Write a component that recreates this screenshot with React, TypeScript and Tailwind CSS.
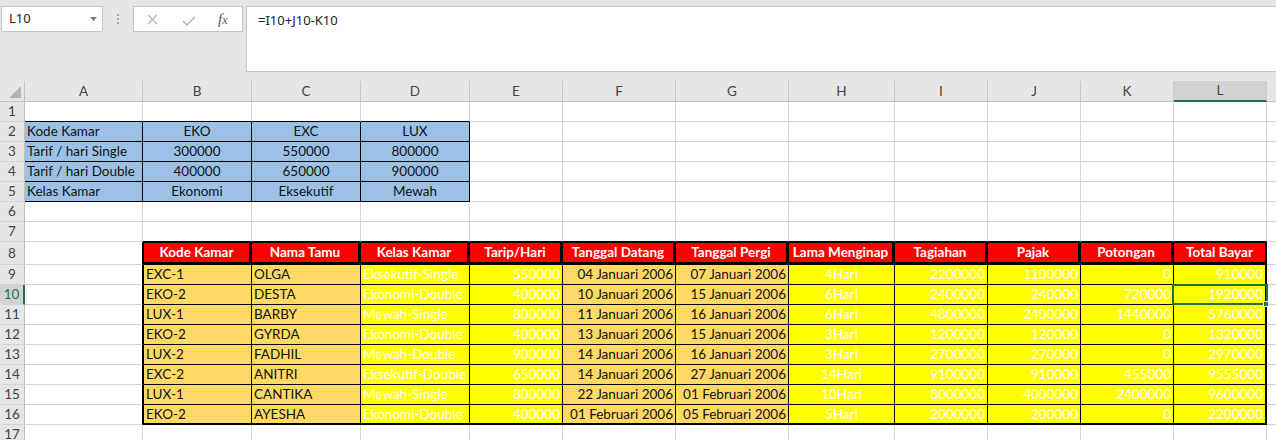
import type { ReactNode } from 'react'

const COLW = ['w-[118px]', 'w-[109px]', 'w-[109px]', 'w-[109px]', 'w-[93px]', 'w-[113px]', 'w-[113px]', 'w-[106px]', 'w-[93px]', 'w-[93px]', 'w-[93px]', 'w-[93px]']
const LETTERS = ['A', 'B', 'C', 'D', 'E', 'F', 'G', 'H', 'I', 'J', 'K', 'L']

const ORANGE = 'bg-[#ffd966] text-[#111]'
const YELLOW = 'bg-[#ffff00] text-white'

// main table columns B..L
const DCOL: { bg: string; al: string }[] = [
  { bg: ORANGE, al: 'justify-start' },
  { bg: ORANGE, al: 'justify-start' },
  { bg: YELLOW, al: 'justify-start' },
  { bg: YELLOW, al: 'justify-end' },
  { bg: ORANGE, al: 'justify-end' },
  { bg: ORANGE, al: 'justify-end' },
  { bg: YELLOW, al: 'justify-center' },
  { bg: YELLOW, al: 'justify-end' },
  { bg: YELLOW, al: 'justify-end' },
  { bg: YELLOW, al: 'justify-end' },
  { bg: YELLOW, al: 'justify-end' },
]

const TOP: string[][] = [
  ['Kode Kamar', 'EKO', 'EXC', 'LUX'],
  ['Tarif / hari Single', '300000', '550000', '800000'],
  ['Tarif / hari Double', '400000', '650000', '900000'],
  ['Kelas Kamar', 'Ekonomi', 'Eksekutif', 'Mewah'],
]

const HEAD = ['Kode Kamar', 'Nama Tamu', 'Kelas Kamar', 'Tarip/Hari', 'Tanggal Datang', 'Tanggal Pergi', 'Lama Menginap', 'Tagiahan', 'Pajak', 'Potongan', 'Total Bayar']

const DATA: string[][] = [
  ['EXC-1', 'OLGA', 'Eksekutif-Single', '550000', '04 Januari 2006', '07 Januari 2006', '4Hari', '2200000', '1100000', '0', '910000'],
  ['EKO-2', 'DESTA', 'Ekonomi-Double', '400000', '10 Januari 2006', '15 Januari 2006', '6Hari', '2400000', '240000', '720000', '1920000'],
  ['LUX-1', 'BARBY', 'Mewah-Single', '800000', '11 Januari 2006', '16 Januari 2006', '6Hari', '4800000', '2400000', '1440000', '5760000'],
  ['EKO-2', 'GYRDA', 'Ekonomi-Double', '400000', '13 Januari 2006', '15 Januari 2006', '3Hari', '1200000', '120000', '0', '1320000'],
  ['LUX-2', 'FADHIL', 'Mewah-Double', '900000', '14 Januari 2006', '16 Januari 2006', '3Hari', '2700000', '270000', '0', '2970000'],
  ['EXC-2', 'ANITRI', 'Eksekutif-Double', '650000', '14 Januari 2006', '27 Januari 2006', '14Hari', '9100000', '910000', '455000', '9555000'],
  ['LUX-1', 'CANTIKA', 'Mewah-Single', '800000', '22 Januari 2006', '01 Februari 2006', '10Hari', '8000000', '4000000', '2400000', '9600000'],
  ['EKO-2', 'AYESHA', 'Ekonomi-Double', '400000', '01 Februari 2006', '05 Februari 2006', '5Hari', '2000000', '200000', '0', '2200000'],
]

function cellClass(r: number, c: number) {
  const parts: string[] = []
  const inTop = r >= 2 && r <= 5 && c <= 3
  const inMain = r >= 8 && r <= 16 && c >= 1

  // right / bottom border colours
  const rBlack = inTop || (r >= 8 && r <= 16)
  const bBlack = (r >= 1 && r <= 5 && c <= 3) || (r >= 7 && r <= 16 && c >= 1)
  parts.push(rBlack ? 'border-r-black' : 'border-r-[#d4d4d4]')
  parts.push(bBlack ? 'border-b-black' : 'border-b-[#d4d4d4]')

  if (inTop) {
    parts.push('bg-[#9bc2e6]', c === 0 ? 'justify-start' : 'justify-center')
  } else if (r === 8 && c >= 1) {
    parts.push('bg-[#ff0000] text-white font-bold justify-center border-t border-t-black border-b-[3px]')
    parts.push(c === 11 ? 'border-r-2' : 'border-r-[3px]')
    if (c === 1) parts.push('border-l border-l-black')
  } else if (inMain) {
    const d = DCOL[c - 1]
    parts.push(d.bg, d.al)
    if (c === 1) parts.push('border-l border-l-black')
    if (c === 11) parts.push('border-r-2')
    if (r === 16) parts.push('border-b-2')
  }
  return parts.join(' ')
}

function cellText(r: number, c: number) {
  if (r >= 2 && r <= 5 && c <= 3) return TOP[r - 2][c]
  if (r === 8 && c >= 1) return HEAD[c - 1]
  if (r >= 9 && r <= 16 && c >= 1) return DATA[r - 9][c - 1]
  return ''
}

function Cell({ r, c }: { r: number; c: number }) {
  const selected = r === 10 && c === 11
  return (
    <div
      className={`${COLW[c]} shrink-0 h-full border-r border-b flex items-center px-[2px] whitespace-nowrap leading-[19px] ${selected ? 'relative z-10' : 'overflow-hidden'} ${cellClass(r, c)}`}
    >
      {cellText(r, c)}
      {selected && (
        <>
          <div className="absolute -left-[2px] -top-[1px] w-[96px] h-[21px] border-2 border-[#217346]" />
          <div className="absolute left-[89px] top-[16px] w-[6px] h-[6px] bg-[#217346] border border-white" />
        </>
      )}
    </div>
  )
}

function RowHead({ n }: { n: number }) {
  const sel = n === 10
  return (
    <div
      className={`w-[25px] shrink-0 h-full flex items-center justify-center border-b border-b-[#d4d4d4] ${
        sel ? 'bg-[#d2d2d2] text-[#217346] border-r-2 border-r-[#217346]' : 'bg-[#e6e6e6] text-[#444] border-r border-r-[#c0c0c0]'
      }`}
    >
      {n}
    </div>
  )
}

function Row({ n, h }: { n: number; h: string }) {
  return (
    <div className={`flex ${h}`}>
      <RowHead n={n} />
      {LETTERS.map((_, c) => (
        <Cell key={c} r={n} c={c} />
      ))}
      <div className="flex-1 h-full border-b border-b-[#d4d4d4]" />
    </div>
  )
}

function Toolbar() {
  return (
    <div className="h-[81px] bg-[#e6e6e6] flex items-start pt-[6px] pl-[1px] font-['Noto_Sans',sans-serif] text-[13px] text-[#222]">
      <div className="w-[102px] h-[26px] shrink-0 bg-white border border-[#c6c6c6] flex items-center justify-between pl-[7px] pr-[5px]">
        <span>L10</span>
        <svg width="7" height="4" viewBox="0 0 7 4">
          <polygon points="0,0 7,0 3.5,4" fill="#7a7a7a" />
        </svg>
      </div>
      <div className="w-[30px] h-[26px] shrink-0 flex flex-col items-center justify-center gap-[2px]">
        <span className="w-[2px] h-[2px] bg-[#a6a6a6]" />
        <span className="w-[2px] h-[2px] bg-[#a6a6a6]" />
        <span className="w-[2px] h-[2px] bg-[#a6a6a6]" />
      </div>
      <div className="w-[110px] h-[26px] shrink-0 bg-white border border-[#c6c6c6] flex items-center pl-[13px]">
        <svg width="11" height="11" viewBox="0 0 11 11" className="shrink-0">
          <path d="M1 1 L10 10 M10 1 L1 10" stroke="#b3b3b3" strokeWidth="1.2" fill="none" />
        </svg>
        <svg width="14" height="10" viewBox="0 0 14 10" className="ml-[24px] mt-[3px] shrink-0">
          <path d="M1 5 L5 9 L13 1" stroke="#b3b3b3" strokeWidth="1.4" fill="none" />
        </svg>
        <span className="ml-[22px] font-['Liberation_Serif',serif] italic text-[15px] text-[#555] leading-none">
          f<span className="text-[12px]">x</span>
        </span>
      </div>
      <div className="ml-[3px] flex-1 h-[66px] bg-white border border-r-0 border-[#c6c6c6] pl-[11px] pt-[5px] leading-[17px]">
        =I10+J10-K10
      </div>
    </div>
  )
}

function ColHeader() {
  return (
    <div className="flex h-[21px] bg-[#e6e6e6] text-[#444]">
      <div className="w-[25px] shrink-0 h-full border-r border-b border-[#c0c0c0] flex items-end justify-end pr-[3px] pb-[3px]">
        <svg width="12" height="12" viewBox="0 0 12 12">
          <polygon points="12,0 12,12 0,12" fill="#b4b4b4" />
        </svg>
      </div>
      {LETTERS.map((l, c) => (
        <div
          key={l}
          className={`${COLW[c]} shrink-0 h-full flex items-center justify-center border-r border-r-[#c6c6c6] ${
            c === 11 ? 'bg-[#d2d2d2] text-[#1f5a37] border-b-2 border-b-[#217346]' : 'border-b border-b-[#c0c0c0]'
          }`}
        >
          {l}
        </div>
      ))}
      <div className="flex-1 h-full border-b border-b-[#c0c0c0]" />
    </div>
  )
}

export default function App() {
  const rows: ReactNode[] = []
  for (let n = 1; n <= 17; n++) {
    rows.push(<Row key={n} n={n} h={n === 8 ? 'h-[23px]' : 'h-[20px]'} />)
  }
  return (
    <div className="w-[1276px] h-[440px] overflow-hidden bg-white font-['Lato',sans-serif] text-[13.5px] text-[#111]">
      <Toolbar />
      <ColHeader />
      {rows}
    </div>
  )
}
